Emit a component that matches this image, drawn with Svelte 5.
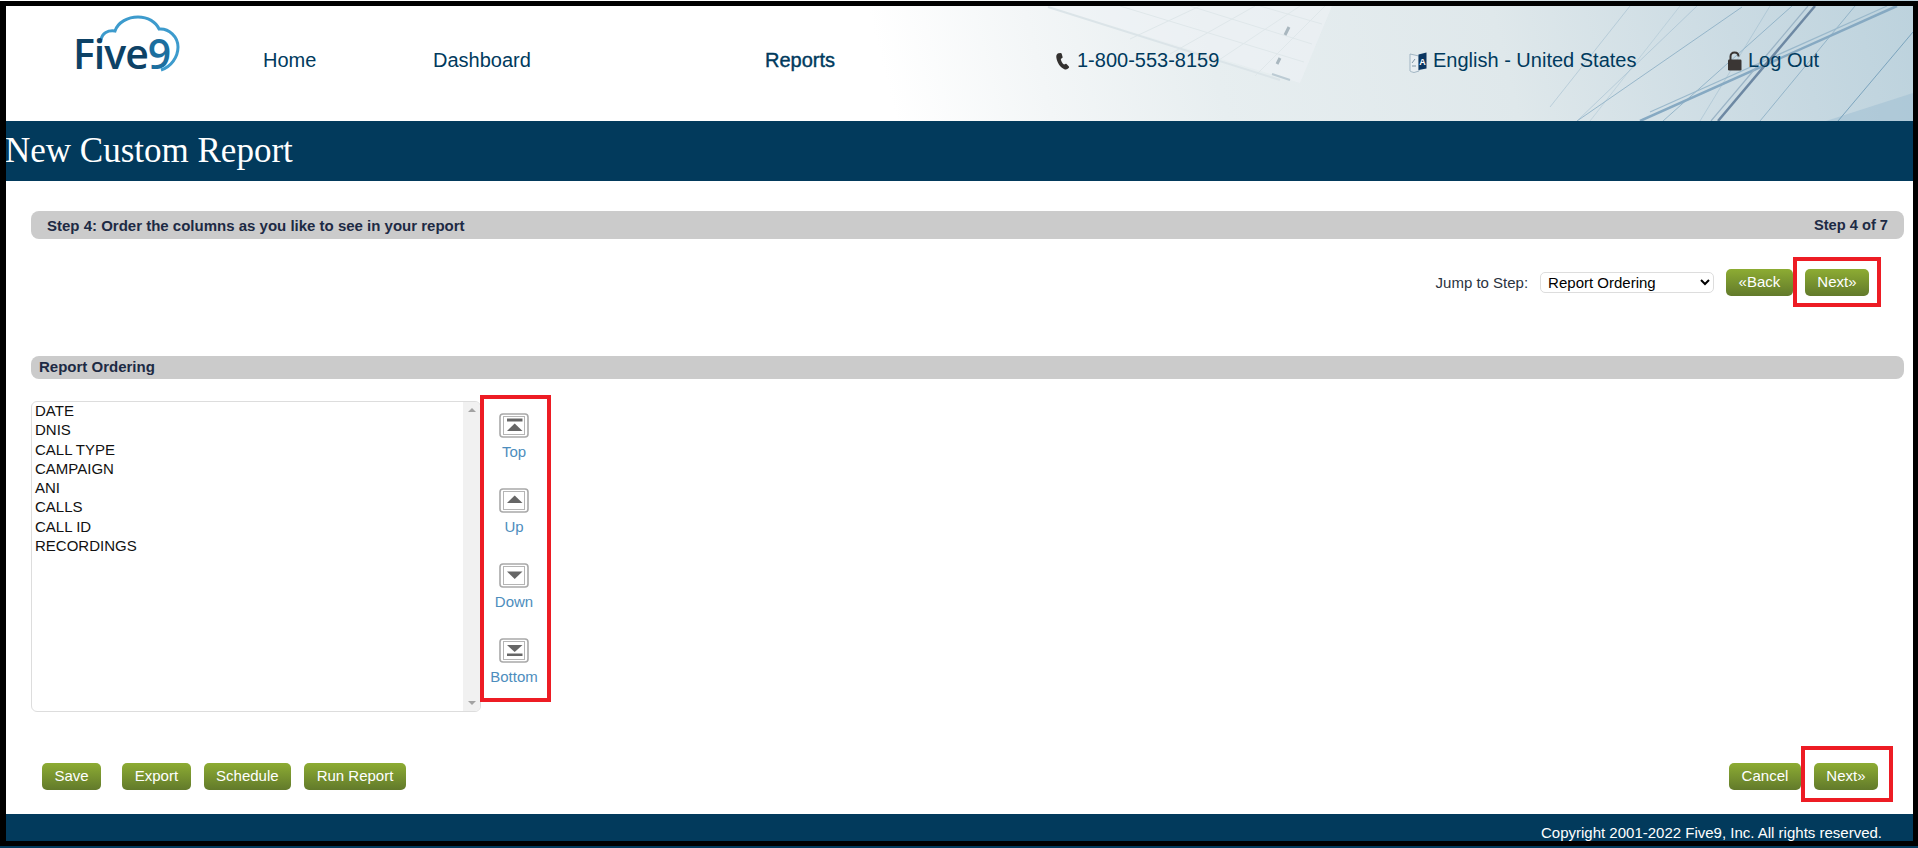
<script>
  const columns = ["DATE", "DNIS", "CALL TYPE", "CAMPAIGN", "ANI", "CALLS", "CALL ID", "RECORDINGS"];
  const moves = [
    { label: "Top", bar: "M8 5.5h15.5v3H8z", arrow: "M8 18L15.7 10.5L23.5 18z" },
    { label: "Up", bar: "", arrow: "M8 15L15.7 7.5L23.5 15z" },
    { label: "Down", bar: "", arrow: "M8 8.5L15.7 16L23.5 8.5z" },
    { label: "Bottom", bar: "M8 15.5h15.5v2.5H8z", arrow: "M8 7L15.7 14L23.5 7z" }
  ];
</script>

<div class="page">
  <header class="header">
    <svg class="scenery" viewBox="0 0 1918 121" preserveAspectRatio="none" aria-hidden="true">
      <path d="M1048 6H1332L1300 83z" fill="#eef3f5" opacity=".55" />
      <g stroke="#dfe7ea" stroke-width="1" fill="none">
        <path d="M1130 39L1200 6M1170 54L1255 6M1210 66L1300 6M1255 76L1325 6" />
        <path d="M1120 6L1304 62M1190 6L1312 44M1260 6L1322 24" />
      </g>
      <path d="M1048 7L1280 80" stroke="#dbe4e8" stroke-width="2" fill="none" />
      <path d="M1289 27L1285 35M1280 58L1277 64" stroke="#a9b7bf" stroke-width="3" fill="none" />
      <path d="M1272 74L1290 80" stroke="#bccbd4" stroke-width="2" fill="none" />
      <path d="M1913 93L1826 121H1913z" fill="#a4c1d3" opacity=".6" />
      <g stroke="#7fa6bf" fill="none" stroke-width="1" opacity=".7">
        <path d="M1742 7L1577 121" />
        <path d="M1855 6L1760 121" />
        <path d="M1913 32L1838 121" stroke="#5f90b0" />
        <path d="M1792 6L1663 121" />
        <path d="M1630 6L1550 107" opacity=".5" />
        <path d="M1697 6L1577 121" opacity=".5" />
        <path d="M1680 6L1590 121" opacity=".35" />
        <path d="M1770 6L1700 121" opacity=".45" />
      </g>
      <path d="M1897 6L1640 121" stroke="#86a9c2" stroke-width="2.5" fill="none" />
      <path d="M1887 6L1650 112" stroke="#9ab8cb" stroke-width="1.2" fill="none" />
      <path d="M1815 6L1718 121" stroke="#6d88a3" stroke-width="2.5" fill="none" />
      <path d="M1808 6L1711 121" stroke="#9ab3c5" stroke-width="1.2" fill="none" />
    </svg>

    <div class="logo">
      <svg class="cloud" viewBox="0 0 115 65" aria-hidden="true">
        <path d="M30 25C31 18 37 15 44 16C47 7 57 2 67 2C77 2 85 7 88 14C98 13 107 22 107 32C107 42 100 52 90 55" fill="none" stroke="#3d9bcd" stroke-width="3" />
      </svg>
      <span class="wordmark">Five<span class="nine">9</span></span>
    </div>
    <a class="nav" href="#home">Home</a>
    <a class="nav" href="#dashboard">Dashboard</a>
    <a class="nav active" href="#reports">Reports</a>
    <span class="nav with-icon">
      <svg class="phone" viewBox="0 0 16 18" aria-hidden="true">
        <path d="M3.4 1.2L5.7 1C6.2 1 6.5 1.2 6.7 1.7L7.6 5C7.7 5.5 7.5 5.9 7.1 6.1L5.8 6.9C6 9 7.2 11.2 9 12.6L10.4 11.9C10.8 11.7 11.2 11.8 11.5 12.1L13.9 14.5C14.2 14.9 14.2 15.4 13.9 15.7L12.4 17.1C11.6 17.7 10.4 17.8 9.3 17.2C5 14.9 2 10.7 1.3 5.2C1.1 3.2 1.9 1.6 3.4 1.2z" fill="#33312f" />
      </svg>
      1-800-553-8159
    </span>
    <span class="nav with-icon">
      <svg class="lang" viewBox="0 0 18 24" aria-hidden="true">
        <path d="M1 5L10 7V22L5 23.5C3 23 1.5 22.5 1 22z" fill="#e8eef2" stroke="#8fa7b8" stroke-width=".8" />
        <path d="M3 14L6 10M3 17L7 17" stroke="#7f97a8" stroke-width="1" fill="none" />
        <path d="M3 2L9.5 5.5L17.5 3.5V19.5L9.5 21V5.5z" fill="#0a3560" />
        <text x="13.6" y="15.6" text-anchor="middle" class="lang-a">A</text>
      </svg>
      English - United States
    </span>
    <span class="nav with-icon">
      <svg class="lock" viewBox="0 0 15 20" aria-hidden="true">
        <path d="M3.5 9V5.5C3.5 3.2 5 1.5 7.5 1.5C10 1.5 11.5 3.2 11.5 5.5" fill="none" stroke="#3a3634" stroke-width="2" />
        <rect x="1" y="8.5" width="13.5" height="11" rx="1.2" fill="#3a3634" />
      </svg>
      Log Out
    </span>
  </header>

  <h1 class="title">New Custom Report</h1>

  <main class="content">
    <div class="bar step-bar">
      <span>Step 4: Order the columns as you like to see in your report</span>
      <span class="step-count">Step 4 of 7</span>
    </div>

    <div class="toolbar">
      <label for="jump">Jump to Step:</label>
      <select id="jump">
        <option>Report Ordering</option>
      </select>
      <button class="btn">«Back</button>
      <button class="btn">Next»</button>
    </div>

    <div class="bar section-bar">Report Ordering</div>

    <div class="ordering">
      <div class="listbox" role="listbox">
        <ul>
          {#each columns as col}
            <li>{col}</li>
          {/each}
        </ul>
        <div class="scrollbar">
          <span class="arrow-up"></span>
          <span class="arrow-down"></span>
        </div>
      </div>

      <div class="moves">
        {#each moves as move}
          <a class="move" href="#move">
            <svg viewBox="0 0 30 25" width="30" height="25" aria-hidden="true">
              <rect x="1" y="1" width="28" height="23" rx="3" fill="#fff" stroke="#a9a9a9" stroke-width="1.6" />
              <rect x="4.5" y="3.5" width="21" height="18" fill="#fff" stroke="#b5b5b5" stroke-width="1" />
              {#if move.bar}
                <path d={move.bar} fill="#666" />
              {/if}
              <path d={move.arrow} fill="#666" />
            </svg>
            <span>{move.label}</span>
          </a>
        {/each}
      </div>
    </div>

    <div class="actions">
      <button class="btn save">Save</button>
      <button class="btn">Export</button>
      <button class="btn">Schedule</button>
      <button class="btn">Run Report</button>
      <button class="btn cancel">Cancel</button>
      <button class="btn">Next»</button>
    </div>
  </main>

  <footer class="footer">Copyright 2001-2022 Five9, Inc. All rights reserved.</footer>

  <!-- annotations drawn over the screenshot -->
  <div class="frame"></div>
  <div class="mark mark-top"></div>
  <div class="mark mark-moves"></div>
  <div class="mark mark-bottom"></div>
</div>

<style>
  :global(body) {
    margin: 0;
    background: #fff;
  }

  .page {
    position: relative;
    width: 1918px;
    height: 848px;
    overflow: hidden;
    display: flex;
    flex-direction: column;
    font-family: "Liberation Sans", Arial, sans-serif;
    font-size: 15px;
    color: #222;
  }

  .header {
    position: relative;
    box-sizing: border-box;
    height: 121px;
    padding-left: 74px;
    display: grid;
    grid-template-columns: 189px 170px 332px 290px 354px 318px auto;
    align-items: center;
    background: linear-gradient(76deg, #fff 0%, #fff 46%, #f3f6f7 54%, #e7eef0 63%, #dfe8eb 78%, #cbdbe3 90%, #bcd2dd 100%);
  }

  .scenery {
    position: absolute;
    inset: 0;
    width: 100%;
    height: 100%;
  }

  .logo {
    position: relative;
    height: 121px;
  }

  .cloud {
    position: absolute;
    left: -3px;
    top: 15px;
    width: 115px;
    height: 65px;
  }

  .wordmark {
    position: absolute;
    left: -1px;
    top: 33px;
    font-family: "Open Sans", sans-serif;
    font-weight: 600;
    font-size: 41px;
    line-height: 40px;
    letter-spacing: -1px;
    color: #0d4266;
  }

  .nine {
    color: #1c6f9f;
  }

  .nav {
    position: relative;
    font-size: 20px;
    color: #003a5d;
    text-decoration: none;
    white-space: nowrap;
  }

  .active {
    -webkit-text-stroke: 0.4px #003a5d;
  }

  .with-icon {
    display: flex;
    align-items: center;
    gap: 6px;
  }

  .phone {
    width: 16px;
    height: 18px;
  }

  .lang {
    width: 18px;
    height: 24px;
  }

  .lang-a {
    font-family: "Liberation Sans", sans-serif;
    font-size: 9px;
    font-weight: bold;
    fill: #fff;
  }

  .lock {
    width: 15px;
    height: 20px;
  }

  .title {
    margin: 0;
    box-sizing: border-box;
    height: 60px;
    padding-left: 5px;
    background: #023a5c;
    color: #fff;
    font-family: "Liberation Serif", "Times New Roman", serif;
    font-size: 35px;
    font-weight: normal;
    line-height: 60px;
  }

  .content {
    flex: 1;
    padding: 30px 14px 0 31px;
  }

  .bar {
    background: #cbcbcb;
    border-radius: 8px;
    font-weight: bold;
    color: #1d2a44;
    white-space: nowrap;
  }

  .step-bar {
    height: 28px;
    padding: 0 16px;
    display: flex;
    justify-content: space-between;
    align-items: center;
  }

  .step-count {
    font-size: 14.67px;
  }

  .toolbar {
    margin: 30px 35px 60px 0;
    height: 27px;
    display: flex;
    justify-content: flex-end;
    align-items: center;
    gap: 12px;
  }

  .toolbar label {
    color: #2b3340;
  }

  .toolbar select {
    width: 174px;
    height: 21px;
    padding: 0 3px;
    background: #fff;
    border: 1px solid #ddd;
    border-radius: 5px;
    color: #000;
    font-family: inherit;
    font-size: 15px;
  }

  .btn {
    height: 27px;
    padding: 0 12.5px 2px;
    border: 0;
    border-radius: 5px;
    background: linear-gradient(#8dac33, #627a2b);
    color: #fff;
    font-family: inherit;
    font-size: 15px;
    white-space: nowrap;
  }

  .section-bar {
    height: 23px;
    padding-left: 8px;
    line-height: 21px;
  }

  .ordering {
    margin-top: 22px;
    display: flex;
  }

  .listbox {
    box-sizing: border-box;
    width: 450px;
    height: 311px;
    border: 1px solid #ddd;
    border-radius: 6px;
    overflow: hidden;
    display: flex;
    background: #fff;
  }

  .listbox ul {
    flex: 1;
    margin: -1px 0 0;
    padding: 0 0 0 3px;
    list-style: none;
    color: #111;
  }

  .listbox li {
    height: 19.3px;
    line-height: 19.3px;
  }

  .scrollbar {
    width: 17px;
    background: #f1f1f1;
    display: flex;
    flex-direction: column;
    justify-content: space-between;
    align-items: center;
    padding: 6px 0;
  }

  .arrow-up,
  .arrow-down {
    width: 0;
    height: 0;
    border-left: 4px solid transparent;
    border-right: 4px solid transparent;
  }

  .arrow-up {
    border-bottom: 4px solid #a3a3a3;
  }

  .arrow-down {
    border-top: 4px solid #a3a3a3;
  }

  .moves {
    width: 66px;
    padding-top: 12px;
    display: flex;
    flex-direction: column;
    gap: 26px;
  }

  .move {
    height: 49px;
    display: flex;
    flex-direction: column;
    align-items: center;
    color: #4d8dbd;
    text-decoration: none;
    line-height: 20px;
  }

  .move svg {
    display: block;
    margin-bottom: 4px;
  }

  .actions {
    margin: 51px 26px 0 11px;
    display: flex;
    gap: 13px;
  }

  .save {
    margin-right: 8px;
  }

  .cancel {
    margin-left: auto;
  }

  .footer {
    box-sizing: border-box;
    height: 34px;
    padding: 10px 36px 0 0;
    background: #023a5c;
    color: #fff;
    text-align: right;
    line-height: 18px;
  }

  .frame {
    position: absolute;
    top: 1px;
    left: 0;
    right: 0;
    bottom: 2px;
    border: solid #000;
    border-width: 5px 5px 5px 6px;
    pointer-events: none;
  }

  .mark {
    position: absolute;
    box-sizing: border-box;
    border: 4px solid #ed1c24;
    pointer-events: none;
  }

  .mark-top {
    left: 1793px;
    top: 257px;
    width: 88px;
    height: 50px;
  }

  .mark-moves {
    left: 480px;
    top: 395px;
    width: 71px;
    height: 307px;
  }

  .mark-bottom {
    left: 1801px;
    top: 746px;
    width: 92px;
    height: 56px;
  }
</style>
